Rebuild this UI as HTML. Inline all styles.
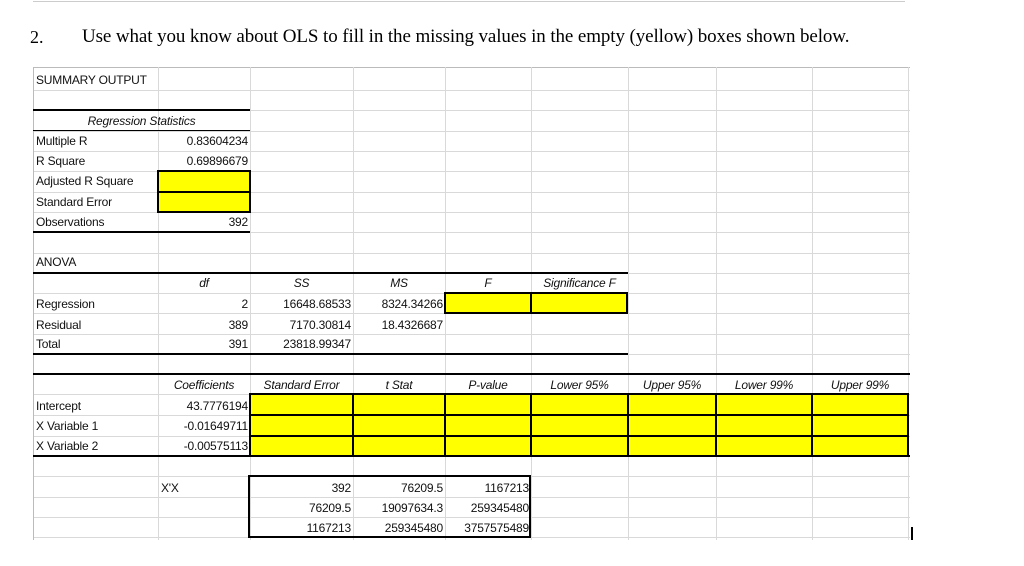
<!DOCTYPE html>
<html><head><meta charset="utf-8"><style>
body{margin:0;width:1024px;height:566px;background:#fff;position:relative;overflow:hidden;font-family:"Liberation Sans",sans-serif}
.h{position:absolute;height:1px;background:#d9d9d9}
.v{position:absolute;width:1px;background:#d9d9d9}
.k{position:absolute;background:#000}
.y{position:absolute;background:#ffff00;border:2px solid #000;box-sizing:border-box}
.t{position:absolute;font-size:12px;line-height:20px;height:20px;color:#111;white-space:nowrap;letter-spacing:-0.2px}
.r{text-align:right}
.c{text-align:center}
.i{font-style:italic}
</style></head><body>
<div class="h" style="left:33px;top:1px;width:872px;background:#ccc"></div>
<div style="position:absolute;left:30px;top:27px;font-family:'Liberation Serif',serif;font-size:18px;">2.</div>
<div style="position:absolute;left:82px;top:26px;font-family:'Liberation Serif',serif;font-size:19px;letter-spacing:-0.1px">Use what you know about OLS to fill in the missing values in the empty (yellow) boxes shown below.</div>

<div class="h" style="left:33px;top:67px;width:877px;background:#bbb"></div>
<div class="h" style="left:33px;top:90px;width:877px"></div>
<div class="h" style="left:33px;top:110px;width:877px"></div>
<div class="h" style="left:33px;top:131px;width:877px"></div>
<div class="h" style="left:33px;top:151px;width:877px"></div>
<div class="h" style="left:33px;top:171px;width:877px"></div>
<div class="h" style="left:33px;top:192px;width:877px"></div>
<div class="h" style="left:33px;top:212px;width:877px"></div>
<div class="h" style="left:33px;top:232px;width:877px"></div>
<div class="h" style="left:33px;top:253px;width:877px"></div>
<div class="h" style="left:33px;top:273px;width:877px"></div>
<div class="h" style="left:33px;top:293px;width:877px"></div>
<div class="h" style="left:33px;top:313px;width:877px"></div>
<div class="h" style="left:33px;top:334px;width:877px"></div>
<div class="h" style="left:33px;top:354px;width:877px"></div>
<div class="h" style="left:33px;top:374px;width:877px"></div>
<div class="h" style="left:33px;top:394px;width:877px"></div>
<div class="h" style="left:33px;top:415px;width:877px"></div>
<div class="h" style="left:33px;top:436px;width:877px"></div>
<div class="h" style="left:33px;top:456px;width:877px"></div>
<div class="h" style="left:33px;top:476px;width:877px"></div>
<div class="h" style="left:33px;top:497px;width:877px"></div>
<div class="h" style="left:33px;top:517px;width:877px"></div>
<div class="h" style="left:33px;top:537px;width:877px"></div>
<div class="v" style="left:33px;top:67px;height:473px;background:#bbb"></div>
<div class="v" style="left:158px;top:67px;height:473px"></div>
<div class="v" style="left:250px;top:67px;height:473px"></div>
<div class="v" style="left:353px;top:67px;height:473px"></div>
<div class="v" style="left:445px;top:67px;height:473px"></div>
<div class="v" style="left:531px;top:67px;height:473px"></div>
<div class="v" style="left:628px;top:67px;height:473px"></div>
<div class="v" style="left:716px;top:67px;height:473px"></div>
<div class="v" style="left:812px;top:67px;height:473px"></div>
<div class="v" style="left:908px;top:67px;height:473px"></div>

<div class="k" style="left:33px;top:109px;width:217px;height:2px"></div>
<div class="k" style="left:33px;top:130px;width:217px;height:1px"></div>
<div class="k" style="left:33px;top:231px;width:217px;height:2px"></div>
<div class="k" style="left:33px;top:272px;width:595px;height:2px"></div>
<div class="k" style="left:33px;top:353px;width:595px;height:2px"></div>
<div class="k" style="left:33px;top:373px;width:877px;height:2px"></div>
<div class="k" style="left:33px;top:455px;width:877px;height:2px"></div>

<div class="y" style="left:157px;top:170px;width:94px;height:23px"></div>
<div class="y" style="left:157px;top:191px;width:94px;height:22px"></div>
<div class="y" style="left:444px;top:292px;width:88px;height:22px"></div>
<div class="y" style="left:530px;top:292px;width:98px;height:22px"></div>
<div class="y" style="left:249px;top:393px;width:105px;height:23px"></div>
<div class="y" style="left:352px;top:393px;width:94px;height:23px"></div>
<div class="y" style="left:444px;top:393px;width:88px;height:23px"></div>
<div class="y" style="left:530px;top:393px;width:99px;height:23px"></div>
<div class="y" style="left:627px;top:393px;width:90px;height:23px"></div>
<div class="y" style="left:715px;top:393px;width:98px;height:23px"></div>
<div class="y" style="left:811px;top:393px;width:98px;height:23px"></div>
<div class="y" style="left:249px;top:414px;width:105px;height:23px"></div>
<div class="y" style="left:352px;top:414px;width:94px;height:23px"></div>
<div class="y" style="left:444px;top:414px;width:88px;height:23px"></div>
<div class="y" style="left:530px;top:414px;width:99px;height:23px"></div>
<div class="y" style="left:627px;top:414px;width:90px;height:23px"></div>
<div class="y" style="left:715px;top:414px;width:98px;height:23px"></div>
<div class="y" style="left:811px;top:414px;width:98px;height:23px"></div>
<div class="y" style="left:249px;top:435px;width:105px;height:22px"></div>
<div class="y" style="left:352px;top:435px;width:94px;height:22px"></div>
<div class="y" style="left:444px;top:435px;width:88px;height:22px"></div>
<div class="y" style="left:530px;top:435px;width:99px;height:22px"></div>
<div class="y" style="left:627px;top:435px;width:90px;height:22px"></div>
<div class="y" style="left:715px;top:435px;width:98px;height:22px"></div>
<div class="y" style="left:811px;top:435px;width:98px;height:22px"></div>

<div style="position:absolute;left:248px;top:475px;width:283px;height:63px;border:2px solid #000;box-sizing:border-box"></div>
<div class="k" style="left:911px;top:527px;width:1.5px;height:13px"></div>

<div class="t" style="left:36px;top:70px">SUMMARY OUTPUT</div>
<div class="t c i" style="left:33px;top:111px;width:217px">Regression Statistics</div>
<div class="t" style="left:36px;top:131px">Multiple R</div>
<div class="t r" style="left:158px;top:131px;width:90px">0.83604234</div>
<div class="t" style="left:36px;top:151px">R Square</div>
<div class="t r" style="left:158px;top:151px;width:90px">0.69896679</div>
<div class="t" style="left:36px;top:171px">Adjusted R Square</div>
<div class="t" style="left:36px;top:192px">Standard Error</div>
<div class="t" style="left:36px;top:212px">Observations</div>
<div class="t r" style="left:158px;top:212px;width:90px">392</div>

<div class="t" style="left:36px;top:252px">ANOVA</div>
<div class="t c i" style="left:158px;top:273px;width:92px">df</div>
<div class="t c i" style="left:250px;top:273px;width:103px">SS</div>
<div class="t c i" style="left:353px;top:273px;width:92px">MS</div>
<div class="t c i" style="left:445px;top:273px;width:86px">F</div>
<div class="t c i" style="left:531px;top:273px;width:97px">Significance F</div>
<div class="t" style="left:36px;top:294px">Regression</div>
<div class="t r" style="left:158px;top:294px;width:90px">2</div>
<div class="t r" style="left:250px;top:294px;width:101px">16648.68533</div>
<div class="t r" style="left:353px;top:294px;width:90px">8324.34266</div>
<div class="t" style="left:36px;top:315px">Residual</div>
<div class="t r" style="left:158px;top:315px;width:90px">389</div>
<div class="t r" style="left:250px;top:315px;width:101px">7170.30814</div>
<div class="t r" style="left:353px;top:315px;width:90px">18.4326687</div>
<div class="t" style="left:36px;top:334px">Total</div>
<div class="t r" style="left:158px;top:334px;width:90px">391</div>
<div class="t r" style="left:250px;top:334px;width:101px">23818.99347</div>

<div class="t c i" style="left:158px;top:375px;width:92px">Coefficients</div>
<div class="t c i" style="left:250px;top:375px;width:103px">Standard Error</div>
<div class="t c i" style="left:353px;top:375px;width:92px">t Stat</div>
<div class="t c i" style="left:445px;top:375px;width:86px">P-value</div>
<div class="t c i" style="left:531px;top:375px;width:97px">Lower 95%</div>
<div class="t c i" style="left:628px;top:375px;width:88px">Upper 95%</div>
<div class="t c i" style="left:716px;top:375px;width:96px">Lower 99%</div>
<div class="t c i" style="left:812px;top:375px;width:96px">Upper 99%</div>
<div class="t" style="left:36px;top:396px">Intercept</div>
<div class="t r" style="left:158px;top:396px;width:90px">43.7776194</div>
<div class="t" style="left:36px;top:416px">X Variable 1</div>
<div class="t r" style="left:158px;top:416px;width:90px">-0.01649711</div>
<div class="t" style="left:36px;top:436px">X Variable 2</div>
<div class="t r" style="left:158px;top:436px;width:90px">-0.00575113</div>

<div class="t" style="left:161px;top:478px">X'X</div>
<div class="t r" style="left:250px;top:478px;width:101px">392</div>
<div class="t r" style="left:353px;top:478px;width:90px">76209.5</div>
<div class="t r" style="left:445px;top:478px;width:84px">1167213</div>
<div class="t r" style="left:250px;top:498px;width:101px">76209.5</div>
<div class="t r" style="left:353px;top:498px;width:90px">19097634.3</div>
<div class="t r" style="left:445px;top:498px;width:84px">259345480</div>
<div class="t r" style="left:250px;top:518px;width:101px">1167213</div>
<div class="t r" style="left:353px;top:518px;width:90px">259345480</div>
<div class="t r" style="left:445px;top:518px;width:84px">3757575489</div>
</body></html>
